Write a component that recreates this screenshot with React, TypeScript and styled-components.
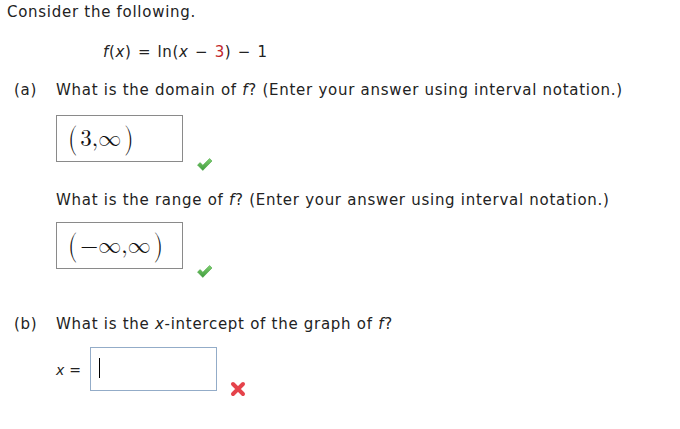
import * as React from "react";
import styled, { createGlobalStyle } from "styled-components";

const GlobalStyle = createGlobalStyle`
  html, body {
    margin: 0;
    padding: 0;
    background: #fff;
  }
  body {
    font-family: "DejaVu Sans", Verdana, sans-serif;
    font-size: 15px;
    letter-spacing: 0.72px;
    color: #222;
  }
`;

const Page = styled.div`
  width: 680px;
  height: 429px;
  padding: 2px 0 0 7px;
  box-sizing: border-box;
`;

const Intro = styled.div`
  line-height: 20px;
`;

const Formula = styled.div`
  margin: 20px 0 0 96px;
  line-height: 20px;
  letter-spacing: 0.65px;
  word-spacing: 1px;
`;

const Red = styled.span`
  color: #c1272d;
`;

const Part = styled.div<{ $top: number }>`
  display: flex;
  margin-top: ${(p) => p.$top}px;
  line-height: 20px;
`;

const Label = styled.span`
  width: 42px;
  padding-left: 7px;
  flex-shrink: 0;
`;

const Body = styled.div`
  display: flex;
  flex-direction: column;
`;

const AnswerRow = styled.div<{ $top: number }>`
  display: flex;
  align-items: flex-start;
  margin-top: ${(p) => p.$top}px;
`;

const AnswerBox = styled.div`
  width: 127px;
  height: 47px;
  box-sizing: border-box;
  border: 1px solid #8a8a8a;
  padding: 0 0 0 11px;
  display: flex;
  align-items: center;
  font-family: "Latin Modern Math", "DejaVu Serif", "Liberation Serif", serif;
  font-size: 23px;
  letter-spacing: 0;
  color: #111;
`;

const Paren = styled.span<{ $side: "l" | "r" }>`
  display: inline-block;
  font-size: 24px;
  transform: scaleY(1.25);
  margin: ${(p) => (p.$side === "l" ? "0 3px 0 0" : "0 0 0 3px")};
`;

const Mark = styled.span<{ $top: number }>`
  margin: ${(p) => p.$top}px 0 0 13px;
  display: inline-flex;
`;

const Question = styled.div<{ $top: number }>`
  margin-top: ${(p) => p.$top}px;
  line-height: 20px;
`;

const Var = styled.i`
  font-style: italic;
`;

const XRow = styled.div`
  display: flex;
  align-items: flex-start;
  margin-top: 13px;
`;

const XLabel = styled.span`
  margin-top: 13px;
  width: 34px;
  font-size: 14px;
  letter-spacing: 0.3px;
`;

const Input = styled.div`
  width: 127px;
  height: 44px;
  box-sizing: border-box;
  border: 1px solid #93acc8;
  padding: 10px 0 0 8px;
`;

const Caret = styled.div`
  width: 1px;
  height: 20px;
  background: #000;
`;

const Check = () => (
  <svg width="17" height="15" viewBox="0 0 17 15">
    <defs>
      <linearGradient id="g" x1="0" y1="0" x2="0" y2="1">
        <stop offset="0" stopColor="#7fcf6f" />
        <stop offset="1" stopColor="#3f9b3c" />
      </linearGradient>
    </defs>
    <path
      d="M1.5 8 L4.2 5.6 L6.8 8.3 L13.6 1.5 L16 4 L6.8 13.4 Z"
      fill="url(#g)"
      stroke="#4aa646"
      strokeWidth="0.6"
      strokeLinejoin="round"
    />
  </svg>
);

const Cross = () => (
  <svg width="16" height="16" viewBox="0 0 16 16">
    <path
      d="M3 3 L13 13 M13 3 L3 13"
      stroke="#e5434b"
      strokeWidth="4"
      strokeLinecap="round"
    />
  </svg>
);

const Interval = ({ children }: { children: React.ReactNode }) => (
  <AnswerBox>
    <Paren $side="l">(</Paren>
    {children}
    <Paren $side="r">)</Paren>
  </AnswerBox>
);

export default function App() {
  return (
    <Page>
      <GlobalStyle />
      <Intro>Consider the following.</Intro>
      <Formula>
        <Var>f</Var>(<Var>x</Var>) = ln(<Var>x</Var> − <Red>3</Red>) − 1
      </Formula>
      <Part $top={18}>
        <Label>(a)</Label>
        <Body>
          <div>
            What is the domain of <Var>f</Var>? (Enter your answer using
            interval notation.)
          </div>
          <AnswerRow $top={15}>
            <Interval>3,∞</Interval>
            <Mark $top={42}>
              <Check />
            </Mark>
          </AnswerRow>
          <Question $top={18}>
            What is the range of <Var>f</Var>? (Enter your answer using
            interval notation.)
          </Question>
          <AnswerRow $top={12}>
            <Interval>−∞,∞</Interval>
            <Mark $top={42}>
              <Check />
            </Mark>
          </AnswerRow>
        </Body>
      </Part>
      <Part $top={35}>
        <Label>(b)</Label>
        <Body>
          <div>
            What is the <Var>x</Var>-intercept of the graph of <Var>f</Var>?
          </div>
          <XRow>
            <XLabel>
              <Var>x</Var> =
            </XLabel>
            <Input>
              <Caret />
            </Input>
            <Mark $top={34}>
              <Cross />
            </Mark>
          </XRow>
        </Body>
      </Part>
    </Page>
  );
}
